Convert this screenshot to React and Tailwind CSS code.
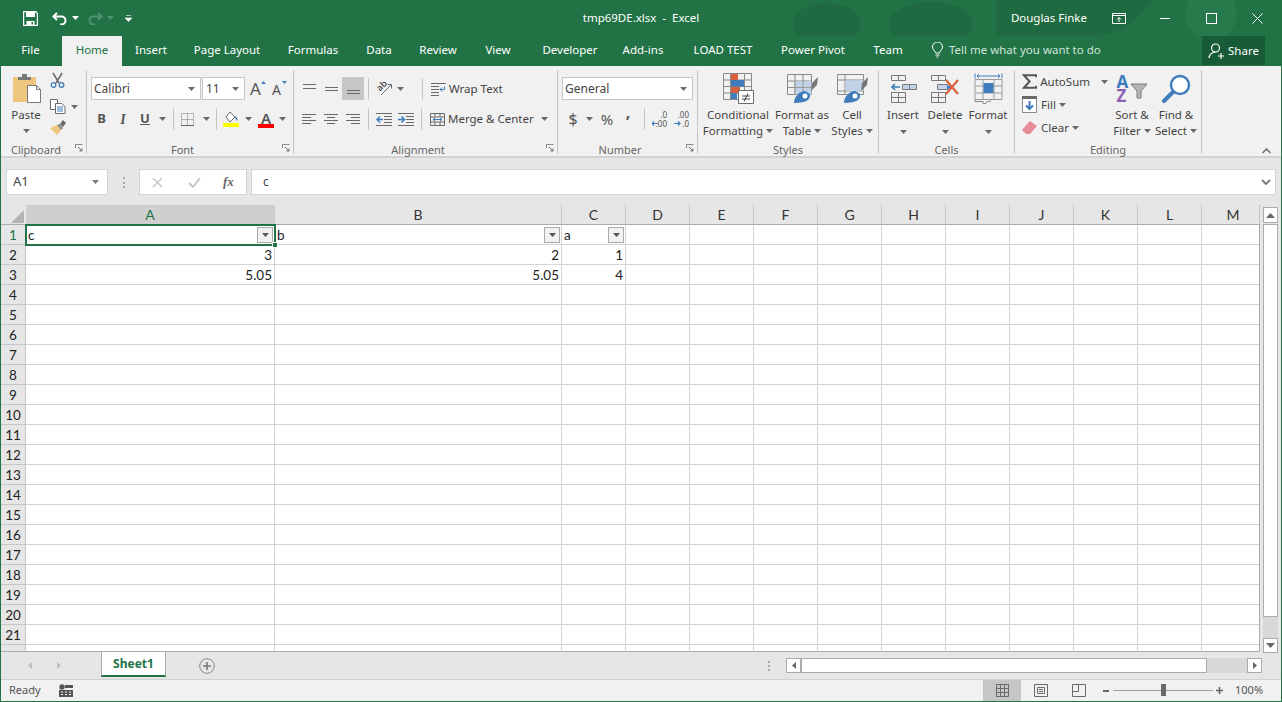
const UI = { fontFamily: '"Noto Sans", "Open Sans", sans-serif' };
const CELL = { fontFamily: 'Lato, "Open Sans", sans-serif' };

const ROWS = Array.from({ length: 21 }, (_, i) => i + 1);
const COLS = ["A", "B", "C", "D", "E", "F", "G", "H", "I", "J", "K", "L", "M"];
const GRID = "grid grid-cols-[25px_249px_287px_64px_64px_64px_64px_64px_64px_64px_64px_64px_64px_58px]";
const TABS = [
  ["Insert", "w-[58px]"],
  ["Page Layout", "w-[94px]"],
  ["Formulas", "w-[78px]"],
  ["Data", "w-[54px]"],
  ["Review", "w-[64px]"],
  ["View", "w-[56px]"],
  ["Developer", "w-[88px]"],
  ["Add-ins", "w-[58px]"],
  ["LOAD TEST", "w-[102px]"],
  ["Power Pivot", "w-[78px]"],
  ["Team", "w-[72px]"],
];

function Caret({ color = "#6a6a6a", className = "" }) {
  return (
    <svg width="7" height="4" viewBox="0 0 7 4" className={`shrink-0 ${className}`}>
      <path d="M0 0h7L3.500 4z" fill={color} />
    </svg>
  );
}

function Sep() {
  return <div className="w-px h-[22px] bg-[#c6c6c6] shrink-0" />;
}

function Launcher() {
  return (
    <svg width="8" height="8" viewBox="0 0 8 8" className="absolute right-[3px] bottom-[2px]">
      <path d="M.5 4V.5H7.500M.5.5V1" stroke="#8a8a8a" fill="none" />
      <path d="M3 3l4 4M7 4.500V7H4.500" stroke="#6a6a6a" fill="none" />
    </svg>
  );
}

function Group({ w, label, launcher, children }) {
  return (
    <div className={`${w} shrink-0 h-[84px] border-r border-[#c6c6c6] flex flex-col relative`}>
      <div className="h-[73px] shrink-0">{children}</div>
      <div className={`h-[14px] shrink-0 leading-[14px] text-center text-[11px] text-[#666] ${launcher ? "pr-[15px]" : ""}`}>
        {label}
      </div>
      {launcher && <Launcher />}
    </div>
  );
}

function Big({ w, icon, lines, caretInline }) {
  return (
    <div className={`${w} shrink-0 flex flex-col items-center`}>
      <div className="h-[37px] flex items-center justify-center">{icon}</div>
      <div className="leading-[16px] text-center whitespace-nowrap">{lines[0]}</div>
      <div className="h-[16px] leading-[16px] flex items-center justify-center whitespace-nowrap gap-[3px]">
        {lines[1]}
        {caretInline ? <Caret /> : <Caret className="mt-[2px]" />}
      </div>
    </div>
  );
}

function Lines({ rows }) {
  return (
    <svg width="15" height="15" viewBox="0 0 15 15" className="shrink-0">
      {rows.map(([y, x1, x2]) => (
        <path key={y} d={`M${x1} ${y}.5H${x2}`} stroke="#6a6a6a" />
      ))}
    </svg>
  );
}

function SaveIcon() {
  return (
    <svg width="15" height="15" viewBox="0 0 15 15">
      <path d="M.5.5h12l2 2v12H.5z" fill="none" stroke="#fff" strokeWidth="1.400" />
      <path d="M3 1h9v5H3zM3.500 10h8v4.500h-8z" fill="#fff" />
      <path d="M8.500 11h1.500v2.500H8.500z" fill="#217346" />
    </svg>
  );
}

function UndoIcon({ color = "#fff" }) {
  return (
    <svg width="15" height="13" viewBox="0 0 15 13">
      <path d="M5 1L1.500 4.500 5 8M2 4.500h7.500a4 4 0 0 1 0 8H8" fill="none" stroke={color} strokeWidth="2" />
    </svg>
  );
}

function RedoIcon() {
  return (
    <svg width="15" height="13" viewBox="0 0 15 13">
      <path d="M10 1l3.500 3.500L10 8M13 4.500H5.500a4 4 0 0 0 0 8H7" fill="none" stroke="#4f9270" strokeWidth="2" />
    </svg>
  );
}

function PasteIcon() {
  return (
    <svg width="30" height="31" viewBox="0 0 30 31">
      <path d="M1 4h23v25H1z" fill="#efc67e" />
      <path d="M6 4h13v3H6zM10 1h5v3h-5z" fill="#7a7a7a" />
      <path d="M15.500 12.500h9l4 4v13h-13z" fill="#fff" stroke="#7a7a7a" />
      <path d="M24.500 12.500v4h4" fill="none" stroke="#7a7a7a" />
    </svg>
  );
}

function CutIcon() {
  return (
    <svg width="15" height="16" viewBox="0 0 15 16">
      <path d="M3 1l6 10M12 1L6 11" stroke="#6a6a6a" strokeWidth="1.500" />
      <circle cx="3.500" cy="13" r="2.300" fill="none" stroke="#3f7cbc" strokeWidth="1.300" />
      <circle cx="11.500" cy="13" r="2.300" fill="none" stroke="#3f7cbc" strokeWidth="1.300" />
    </svg>
  );
}

function CopyIcon() {
  return (
    <svg width="16" height="15" viewBox="0 0 16 15">
      <path d="M.5.5h7v10h-7z" fill="#fff" stroke="#6a6a6a" />
      <path d="M5.500 4.500h6l3.500 3v7H5.500z" fill="#fff" stroke="#6a6a6a" />
      <path d="M7 8h6M7 10h6M7 12h6" stroke="#3f7cbc" />
    </svg>
  );
}

function BrushIcon() {
  return (
    <svg width="16" height="15" viewBox="0 0 16 15">
      <path d="M0 8l7-3 4 5-4 5z" fill="#efc67e" />
      <path d="M7 5l4 5 2-2-3-4z" fill="#8a8a8a" />
      <path d="M10 4l3-4 3 3-3 4z" fill="#6a6a6a" />
    </svg>
  );
}

function BigA() {
  return (
    <span className="relative w-[16px] h-[18px] block shrink-0">
      <span className="absolute left-0 top-[-1px] text-[17px] leading-[20px] text-[#555]">A</span>
      <svg width="5" height="3" className="absolute right-0 top-[1px]"><path d="M0 3h5L2.500 0z" fill="#3f7cbc" /></svg>
    </span>
  );
}

function SmallA() {
  return (
    <span className="relative w-[15px] h-[18px] block shrink-0">
      <span className="absolute left-0 top-[2px] text-[14px] leading-[16px] text-[#555]">A</span>
      <svg width="5" height="3" className="absolute right-0 top-[1px]"><path d="M0 0h5L2.500 3z" fill="#3f7cbc" /></svg>
    </span>
  );
}

function BorderIcon() {
  return (
    <svg width="13" height="13" viewBox="0 0 13 13">
      <path d="M.5.5h12v12H.5zM6.500.5v12M.5 6.500h12" fill="none" stroke="#777" strokeDasharray="1 1" />
      <path d="M0 12.500h13" stroke="#666" />
    </svg>
  );
}

function FillIcon() {
  return (
    <svg width="16" height="16" viewBox="0 0 16 16">
      <path d="M7 1l5 5-5 5-4-5z" fill="#fff" stroke="#6a6a6a" />
      <path d="M12 5c2 1 3 3 2 5-1-1-2-3-2-5z" fill="#3f7cbc" />
      <path d="M0 12h16v4H0z" fill="#ffff00" />
    </svg>
  );
}

function ColorAIcon() {
  return (
    <span className="relative w-[16px] h-[17px] flex justify-center shrink-0">
      <span className="text-[15px] leading-[15px] font-semibold text-[#555]">A</span>
      <span className="absolute left-0 right-0 bottom-0 h-[4px] bg-[#ff0000]" />
    </span>
  );
}

function OrientIcon() {
  return (
    <span className="relative block w-[17px] h-[15px] shrink-0">
      <span className="absolute left-0 top-[-1px] text-[9px] leading-[11px] font-semibold text-[#555] rotate-[-45deg]">ab</span>
      <svg width="17" height="15" viewBox="0 0 17 15" className="absolute left-0 top-0">
        <path d="M5 14L15 4M11.500 3.500h4v4" fill="none" stroke="#6a6a6a" />
      </svg>
    </span>
  );
}

function WrapIcon() {
  return (
    <svg width="15" height="15" viewBox="0 0 15 15">
      <path d="M0 2.500h15M0 5.500h8M0 8.500h8M0 11.500h8M0 14.500h8" stroke="#6a6a6a" />
      <path d="M9 8.500h4.500v-3M9 8.500l2-2M9 8.500l2 2" stroke="#3f7cbc" fill="none" />
    </svg>
  );
}

function MergeIcon() {
  return (
    <svg width="15" height="15" viewBox="0 0 15 15">
      <path d="M.5 1.500h14v12H.5zM.5 5h14M.5 10h14M5 1.500V5M10 1.500V5M5 10v3.500M10 10v3.500" fill="none" stroke="#6a6a6a" />
      <path d="M3 7.500h9M3 7.500l2-1.500M3 7.500L5 9M12 7.500L10 6M12 7.500L10 9" stroke="#3f7cbc" fill="none" />
    </svg>
  );
}

function IndentIcon({ flip }) {
  return (
    <svg width="16" height="13" viewBox="0 0 16 13">
      <path d="M0 .5h16M8 3.500h8M8 6.500h8M8 9.500h8M0 12.500h16" stroke="#6a6a6a" />
      {flip ? (
        <path d="M0 6.500h6M3.500 3.500l3 3-3 3" stroke="#3f7cbc" strokeWidth="1.500" fill="none" />
      ) : (
        <path d="M1 6.500h6M4 3.500l-3 3 3 3" stroke="#3f7cbc" strokeWidth="1.500" fill="none" />
      )}
    </svg>
  );
}

function DecimalIcon({ more }) {
  return (
    <span className="relative block w-[15px] h-[15px] shrink-0">
      <svg width="7" height="7" viewBox="0 0 7 7" className="absolute bottom-0 left-0">
        {more ? (
          <path d="M0 3.500h6M4 1.500l2 2-2 2" stroke="#3f7cbc" strokeWidth="1.200" fill="none" />
        ) : (
          <path d="M0 3.500h6M2 1.500l-2 2 2 2" stroke="#3f7cbc" strokeWidth="1.200" fill="none" />
        )}
      </svg>
      <span className="absolute right-0 top-[-2px] text-[8px] leading-[9px] text-[#555]">{more ? ".00" : ".0"}</span>
      <span className="absolute right-0 bottom-[-1px] text-[8px] leading-[9px] text-[#555]">{more ? ".0" : ".00"}</span>
    </span>
  );
}

function CondIcon() {
  return (
    <svg width="31" height="31" viewBox="0 0 31 31">
      <path d="M.5.500h28v26H.5zM7.500.5v26M21.500.5v26M.5 7h28M.5 13.500h28M.5 20h28" fill="none" stroke="#8a8a8a" />
      <path d="M8 1h7v6H8zM8 14h9v6H8z" fill="#d9603c" />
      <path d="M8 7h13v6.500H8zM8 20h6v6H8z" fill="#3f7cbc" />
      <path d="M15.500 17.500h15v13h-15z" fill="#fff" stroke="#6a6a6a" />
      <path d="M19 23h8M19 26h8M25 20.500l-4 8" stroke="#444" />
    </svg>
  );
}

function TableIcon() {
  return (
    <svg width="31" height="31" viewBox="0 0 31 31">
      <path d="M.5 1.500h24v20H.5zM8 1.500v20M16 1.500v20M.5 8h24M.5 14.500h24" fill="none" stroke="#8a8a8a" />
      <path d="M8.500 8.500h16v13h-16z" fill="#c0d3e8" />
      <path d="M8 8v14M16 8v14M8 14.500h17" stroke="#9a9a9a" />
      <path d="M25 10l6-6-1 8-6 6z" fill="#777" />
      <path d="M7 30c0-7 6-12 11-12l5 3c1 5-3 9-16 9z" fill="#3f7cbc" />
      <circle cx="18" cy="23" r="2.500" fill="#fff" />
    </svg>
  );
}

function CellStyleIcon() {
  return (
    <svg width="31" height="31" viewBox="0 0 31 31">
      <path d="M.5 1.500h26v20H.5zM8 1.500v20M.5 7h26M.5 18h26" fill="none" stroke="#8a8a8a" />
      <path d="M8.500 7.500h18V18h-18z" fill="#c0d3e8" />
      <path d="M25 10l6-6-1 8-6 6z" fill="#777" />
      <path d="M7 30c0-7 6-12 11-12l5 3c1 5-3 9-16 9z" fill="#3f7cbc" />
      <circle cx="18" cy="23" r="2.500" fill="#fff" />
    </svg>
  );
}

function InsertIcon() {
  return (
    <svg width="27" height="28" viewBox="0 0 27 28">
      <path d="M1.500.5h14v5h-14zM8.500.5v5M1.500 17.500h14v10h-14zM1.500 22.500h14M8.500 17.500v10" fill="none" stroke="#7a7a7a" />
      <path d="M12.500 9.500h14v5h-14z" fill="#c0d3e8" stroke="#7a7a7a" />
      <path d="M19.500 9.500v5" stroke="#7a7a7a" />
      <path d="M2 12h8M5 9l-3 3 3 3" stroke="#3f7cbc" strokeWidth="1.700" fill="none" />
    </svg>
  );
}

function DeleteIcon() {
  return (
    <svg width="30" height="28" viewBox="0 0 30 28">
      <path d="M1.500.5h14v5h-14zM8.500.5v5M1.500 17.500h14v10h-14zM1.500 22.500h14M8.500 17.500v10" fill="none" stroke="#7a7a7a" />
      <path d="M7.500 9.500h10v5h-10z" fill="#c0d3e8" stroke="#7a7a7a" />
      <path d="M17 10l5 2-5 3z" fill="#3f7cbc" />
      <path d="M16 5l12 14M28 5L16 19" stroke="#d9603c" strokeWidth="2.200" />
    </svg>
  );
}

function FormatIcon() {
  return (
    <svg width="29" height="31" viewBox="0 0 29 31">
      <path d="M1 .500v5M28 .5v5M3 3h23M3 3l2-2M3 3l2 2M26 3l-2-2M26 3l-2 2" stroke="#3f7cbc" fill="none" />
      <path d="M1 6.500h27v20H1zM9 6.500v20M20 6.500v20M1 13h27M1 20h27" fill="none" stroke="#9a9a9a" />
      <path d="M9.500 10h10v10h-10z" fill="#3f7cbc" />
      <path d="M1 26.500v2h8v2h3l1-2h3l1-2" fill="none" stroke="#8a8a8a" />
    </svg>
  );
}

function SortIcon() {
  return (
    <span className="relative block w-[31px] h-[31px]">
      <span className="absolute left-0 top-[2px] text-[17px] leading-[13px] font-bold text-[#3f7cbc]">A</span>
      <span className="absolute left-0 top-[16px] text-[17px] leading-[13px] font-bold text-[#8f5fb5]">Z</span>
      <svg width="18" height="16" viewBox="0 0 18 16" className="absolute right-0 top-[10px]">
        <path d="M1 1h16l-6 7v7H7V8z" fill="#b5b5b5" stroke="#7a7a7a" />
      </svg>
    </span>
  );
}

function FindIcon() {
  return (
    <svg width="29" height="30" viewBox="0 0 29 30">
      <circle cx="18" cy="11" r="9" fill="#fff" stroke="#3f7cbc" strokeWidth="2.400" />
      <path d="M11 18L2 27" stroke="#3f7cbc" strokeWidth="4" strokeLinecap="round" />
    </svg>
  );
}

function FilterBtn() {
  return (
    <div className="absolute top-[2px] right-[1px] w-[16px] h-[16px] bg-[#f1f1f1] border border-[#ababab] flex items-center justify-center">
      <Caret color="#555" />
    </div>
  );
}

function TitleBar() {
  return (
    <div className="h-[36px] grid grid-cols-[1fr_auto_1fr] items-center relative">
      <svg width="500" height="36" viewBox="0 0 500 36" className="absolute right-0 top-0">
        <ellipse cx="46" cy="24" rx="34" ry="21" fill="#1f6a40" />
        <ellipse cx="150" cy="24" rx="42" ry="22" fill="#1f6a40" />
        <path d="M215 0h155c-5 14-30 36-60 36h-95z" fill="#1f6a40" />
        <circle cx="430" cy="14" r="26" fill="#277a4c" />
      </svg>
      <div className="flex items-center relative pl-[22px]">
        <SaveIcon />
        <div className="ml-[14px]"><UndoIcon /></div>
        <Caret color="#fff" className="ml-[5px]" />
        <div className="ml-[9px]"><RedoIcon /></div>
        <Caret color="#4f9270" className="ml-[4px]" />
        <svg width="7" height="7" viewBox="0 0 7 7" className="ml-[11px]">
          <path d="M1 .500h5M0 3h7L3.500 6.500z" stroke="#fff" fill="#fff" strokeWidth=".6" />
        </svg>
      </div>
      <div className="text-white text-[11.5px] whitespace-pre relative">tmp69DE.xlsx  -  Excel</div>
      <div className="flex items-center justify-end relative">
        <span className="text-white text-[11.5px] whitespace-nowrap">Douglas Finke</span>
        <svg width="14" height="11" viewBox="0 0 14 11" className="ml-[25px]">
          <path d="M.5.5h13v10H.5zM.5 2.500h13M7 9V4.500M5 6.500l2-2 2 2" fill="none" stroke="#fff" />
        </svg>
        <div className="w-[10px] h-px bg-white ml-[34px]" />
        <div className="w-[11px] h-[11px] border border-white ml-[36px]" />
        <svg width="11" height="11" viewBox="0 0 11 11" className="ml-[35px] mr-[18px]">
          <path d="M.5.5l10 10M10.500.5l-10 10" stroke="#fff" />
        </svg>
      </div>
    </div>
  );
}

function TabRow() {
  return (
    <div className="h-[30px] flex items-stretch text-[11.5px] text-white relative">
      <div className="w-[61px] pr-[2px] pb-[2px] flex items-center justify-center">File</div>
      <div className="w-[60px] pb-[2px] flex items-center justify-center bg-[#f1f1f1] text-[#217346]">Home</div>
      {TABS.map(([name, w]) => (
        <div key={name} className={`${w} pb-[2px] flex items-center justify-center whitespace-nowrap`}>{name}</div>
      ))}
      <div className="flex items-center ml-[8px] pb-[2px] text-[#cfe3d8]">
        <svg width="11" height="16" viewBox="0 0 11 16">
          <path d="M3.500 11C3 8.500.5 7.500.5 5a5 5 0 0 1 10 0c0 2.500-2.500 3.500-3 6zM3.500 13h4M4.500 15h2" fill="none" stroke="#fff" />
        </svg>
        <span className="ml-[6px] whitespace-nowrap">Tell me what you want to do</span>
      </div>
      <div className="ml-auto mr-[16px] w-[63px] h-[29px] bg-[#185c37] flex items-center justify-center">
        <svg width="16" height="16" viewBox="0 0 16 16">
          <circle cx="7.500" cy="5" r="4" fill="none" stroke="#fff" strokeWidth="1.200" />
          <path d="M1 15c0-3 3-6 6.500-6M10 13h6M13 10v6" fill="none" stroke="#fff" strokeWidth="1.200" />
        </svg>
        <span className="ml-[4px] text-white">Share</span>
      </div>
    </div>
  );
}

function Ribbon() {
  return (
    <div className="h-[92px] bg-[#f1f1f1] border-b-2 border-[#d2d2d2] pt-[4px] flex text-[11.5px] text-[#444]" style={UI}>
      <Group w="w-[86px]" label="Clipboard" launcher>
        <div className="flex h-full">
          <div className="w-[47px] pl-[3px] flex flex-col items-center">
            <div className="h-[37px] flex items-center pl-[2px]"><PasteIcon /></div>
            <div className="leading-[16px]">Paste</div>
            <div className="h-[16px] flex items-center"><Caret /></div>
          </div>
          <div className="flex flex-col pl-[2px]">
            <div className="h-[22px] pt-[2px]"><CutIcon /></div>
            <div className="h-[25px] pt-[4px] flex items-center gap-[5px]"><CopyIcon /><Caret /></div>
            <div className="pt-[3px]"><BrushIcon /></div>
          </div>
        </div>
      </Group>

      <Group w="w-[207px]" label="Font" launcher>
        <div className="pl-[4px] pt-[7px] flex items-center text-[12px]">
          <div className="w-[110px] h-[23px] bg-white border border-[#c6c6c6] flex items-center justify-between px-[2px] pr-[5px]">
            <span>Calibri</span><Caret />
          </div>
          <div className="w-[43px] h-[23px] bg-white border border-[#c6c6c6] ml-px flex items-center justify-between px-[3px] pr-[5px]">
            <span>11</span><Caret />
          </div>
          <div className="ml-[5px]"><BigA /></div>
          <div className="ml-[6px]"><SmallA /></div>
        </div>
        <div className="pl-[4px] mt-[8px] h-[22px] flex items-center">
          <div className="w-[21px] text-center font-bold text-[13px] text-[#555]">B</div>
          <div className="w-[22px] text-center italic font-bold text-[14px] text-[#555]" style={{ fontFamily: '"Liberation Serif", serif' }}>I</div>
          <div className="w-[22px] text-center underline font-bold text-[13px] text-[#555]">U</div>
          <div className="w-[12px] flex justify-center"><Caret /></div>
          <div className="ml-[5px]"><Sep /></div>
          <div className="w-[27px] flex justify-center"><BorderIcon /></div>
          <div className="w-[10px] flex justify-center"><Caret /></div>
          <div className="ml-[5px]"><Sep /></div>
          <div className="w-[28px] flex justify-center"><FillIcon /></div>
          <Caret />
          <div className="ml-[6px]"><ColorAIcon /></div>
          <Caret className="ml-[5px]" />
        </div>
      </Group>

      <Group w="w-[264px]" label="Alignment" launcher>
        <div className="pl-[8px] pt-[7px] flex items-center h-[30px]">
          <Lines rows={[[3, 1, 14], [7, 1, 14]]} />
          <div className="ml-[7px]"><Lines rows={[[6, 1, 14], [9, 1, 14]]} /></div>
          <div className="ml-[3px] w-[22px] h-[23px] bg-[#c6c6c6] flex items-center justify-center"><Lines rows={[[9, 1, 14], [12, 1, 14]]} /></div>
          <div className="ml-[4px]"><Sep /></div>
          <div className="ml-[7px]"><OrientIcon /></div>
          <Caret className="ml-[4px]" />
          <div className="ml-[18px]"><Sep /></div>
          <div className="ml-[8px]"><WrapIcon /></div>
          <span className="ml-[3px] whitespace-nowrap">Wrap Text</span>
        </div>
        <div className="pl-[8px] mt-[8px] h-[22px] flex items-center">
          <Lines rows={[[2, 0, 14], [5, 0, 9], [8, 0, 14], [11, 0, 9]]} />
          <div className="ml-[7px]"><Lines rows={[[2, 0, 14], [5, 3, 11], [8, 0, 14], [11, 3, 11]]} /></div>
          <div className="ml-[7px]"><Lines rows={[[2, 0, 14], [5, 5, 14], [8, 0, 14], [11, 5, 14]]} /></div>
          <div className="ml-[7px]"><Sep /></div>
          <div className="ml-[7px]"><IndentIcon /></div>
          <div className="ml-[6px]"><IndentIcon flip /></div>
          <div className="ml-[7px]"><Sep /></div>
          <div className="ml-[8px]"><MergeIcon /></div>
          <span className="ml-[3px] w-[86px] whitespace-nowrap">Merge &amp; Center</span>
          <Caret className="ml-[7px]" />
        </div>
      </Group>

      <Group w="w-[140px]" label="Number" launcher>
        <div className="pl-[4px] pt-[7px] text-[12px]">
          <div className="w-[131px] h-[23px] bg-white border border-[#c6c6c6] flex items-center justify-between px-[2px] pr-[5px]">
            <span>General</span><Caret />
          </div>
        </div>
        <div className="pl-[4px] mt-[8px] h-[22px] flex items-center text-[#555]">
          <div className="w-[22px] text-center text-[16px]">$</div>
          <Caret className="ml-[2px]" />
          <div className="ml-[4px] w-[20px] text-center text-[15px]">%</div>
          <div className="ml-px w-[20px] h-[22px] leading-[8px] text-center text-[16px] font-bold">,</div>
          <div className="ml-[6px]"><Sep /></div>
          <div className="ml-[7px]"><DecimalIcon /></div>
          <div className="ml-[7px]"><DecimalIcon more /></div>
        </div>
      </Group>

      <Group w="w-[181px]" label="Styles">
        <div className="flex pl-[6px]">
          <Big w="w-[68px]" icon={<CondIcon />} lines={["Conditional", "Formatting"]} caretInline />
          <Big w="w-[60px]" icon={<TableIcon />} lines={["Format as", "Table"]} caretInline />
          <Big w="w-[40px]" icon={<CellStyleIcon />} lines={["Cell", "Styles"]} caretInline />
        </div>
      </Group>

      <Group w="w-[136px]" label="Cells">
        <div className="flex pl-[3px]">
          <Big w="w-[42px]" icon={<InsertIcon />} lines={["Insert", ""]} />
          <Big w="w-[42px]" icon={<DeleteIcon />} lines={["Delete", ""]} />
          <Big w="w-[44px]" icon={<FormatIcon />} lines={["Format", ""]} />
        </div>
      </Group>

      <Group w="w-[187px]" label="Editing">
        <div className="flex">
          <div className="w-[93px] pl-[7px] flex flex-col">
            <div className="h-[23px] flex items-center">
              <svg width="16" height="15" viewBox="0 0 16 15">
                <path d="M15 3V1H2l6 6.500L2 14h13v-2" fill="none" stroke="#555" strokeWidth="2.200" />
              </svg>
              <span className="ml-[3px]">AutoSum</span>
              <Caret className="ml-[11px]" />
            </div>
            <div className="h-[23px] flex items-center">
              <svg width="15" height="17" viewBox="0 0 15 17">
                <path d="M.5 1.500h14v15H.5z" fill="#fff" stroke="#8a8a8a" />
                <path d="M0 0h15v3H0z" fill="#6a6a6a" />
                <path d="M7.500 5v8M4 9.500l3.500 3.500L11 9.500" stroke="#3f7cbc" strokeWidth="2" fill="none" />
              </svg>
              <span className="ml-[4px]">Fill</span>
              <Caret className="ml-[3px]" />
            </div>
            <div className="h-[23px] flex items-center">
              <svg width="15" height="13" viewBox="0 0 15 13">
                <path d="M0 9l8-9 7 5-7 8H4z" fill="#e88c98" />
              </svg>
              <span className="ml-[4px]">Clear</span>
              <Caret className="ml-[3px]" />
            </div>
          </div>
          <Big w="w-[48px]" icon={<SortIcon />} lines={["Sort &", "Filter"]} caretInline />
          <Big w="w-[40px]" icon={<FindIcon />} lines={["Find &", "Select"]} caretInline />
        </div>
      </Group>

      <div className="flex-1 flex justify-end items-end pb-[2px] pr-[10px]">
        <svg width="9" height="6" viewBox="0 0 9 6"><path d="M.5 5l4-4 4 4" fill="none" stroke="#6a6a6a" strokeWidth="1.500" /></svg>
      </div>
    </div>
  );
}

function FormulaBar() {
  return (
    <div className="h-[47px] pt-[11px] pl-[5px] pr-[5px] flex items-start text-[#444]" style={UI}>
      <div className="w-[102px] h-[26px] bg-white border border-[#d4d4d4] flex items-center justify-between pl-[6px] pr-[8px] text-[13px]">
        <span>A1</span><Caret color="#777" />
      </div>
      <div className="w-[31px] h-[26px] flex items-center justify-center">
        <div className="w-[2px] h-[11px] border-l-2 border-dotted border-[#aaa]" />
      </div>
      <div className="w-[108px] h-[26px] bg-white border border-[#d4d4d4] flex items-center">
        <svg width="11" height="11" viewBox="0 0 11 11" className="ml-[12px]"><path d="M1 1l9 9M10 1l-9 9" stroke="#c6c6c6" strokeWidth="1.500" /></svg>
        <svg width="13" height="11" viewBox="0 0 13 11" className="ml-[25px]"><path d="M1 6l4 4 7-9" stroke="#c6c6c6" strokeWidth="2" fill="none" /></svg>
        <span className="ml-[22px] text-[13px] italic font-bold text-[#666]" style={{ fontFamily: '"Liberation Serif", serif' }}>fx</span>
      </div>
      <div className="ml-[4px] flex-1 h-[26px] bg-white border border-[#d4d4d4] flex items-center justify-between pl-[11px] pr-[4px] text-[12px]">
        <span>c</span>
        <svg width="10" height="6" viewBox="0 0 10 6"><path d="M1 1l4 4 4-4" fill="none" stroke="#777" strokeWidth="1.800" /></svg>
      </div>
    </div>
  );
}

function Sheet() {
  const cellBase = "border-r border-b border-[#d4d4d4] relative";
  return (
    <div className="h-[447px] flex" style={CELL}>
      <div className="w-[1259px] relative bg-white">
        <div className={`${GRID} h-[20px] bg-[#e6e6e6] border-b border-[#ababab] text-[14px] leading-[19px] text-[#333]`}>
          <div className="relative">
            <svg width="13" height="13" viewBox="0 0 13 13" className="absolute left-[10px] bottom-[1px]"><path d="M13 0v13H0z" fill="#b4b4b4" /></svg>
          </div>
          {COLS.map((c) => (
            <div key={c} className={`text-center border-r border-[#c6c6c6] ${c === "A" ? "bg-[#cfcfcf] text-[#217346] border-[#ababab]" : ""} ${c === "M" ? "pl-[5px]" : ""}`}>{c}</div>
          ))}
        </div>
        {ROWS.map((r) => (
          <div key={r} className={`${GRID} grid-rows-[20px] h-[20px] text-[13.5px] leading-[21px] text-[#222]`}>
            <div className={`bg-[#e6e6e6] border-r border-b border-[#c6c6c6] text-center ${r === 1 ? "bg-[#d2d2d2] text-[#217346]" : ""}`}>{r}</div>
            {COLS.map((c) => {
              let text = "";
              let right = true;
              if (r === 1 && c === "A") { text = "c"; right = false; }
              if (r === 1 && c === "B") { text = "b"; right = false; }
              if (r === 1 && c === "C") { text = "a"; right = false; }
              if (r === 2 && c === "A") text = "3";
              if (r === 2 && c === "B") text = "2";
              if (r === 2 && c === "C") text = "1";
              if (r === 3 && c === "A") text = "5.05";
              if (r === 3 && c === "B") text = "5.05";
              if (r === 3 && c === "C") text = "4";
              return (
                <div key={c} className={`${cellBase} ${right ? "text-right pr-[2px]" : "text-left pl-[2px]"}`}>
                  {text}
                  {r === 1 && ["A", "B", "C"].includes(c) && <FilterBtn />}
                </div>
              );
            })}
          </div>
        ))}
        <div className={`${GRID} h-[7px] border-b border-[#ababab]`}>
          <div className="bg-[#e6e6e6] border-r border-[#c6c6c6]" />
          {COLS.map((c) => <div key={c} className="border-r border-[#d4d4d4]" />)}
        </div>
        <div className="absolute right-0 top-[19px] bottom-0 w-px bg-[#ababab]" />
        {/* selected cell A1 */}
        <div className="absolute left-[24px] top-[19px] w-[251px] h-[22px] border-2 border-[#217346]">
          <div className="absolute right-[-4px] bottom-[-4px] w-[6px] h-[6px] bg-[#217346] border border-white" />
        </div>
      </div>
      <div className="flex-1 bg-[#e6e6e6] pl-[3px] pr-[3px] pt-[2px] flex flex-col">
        <div className="h-[16px] bg-white border border-[#ababab] flex items-center justify-center shrink-0">
          <svg width="9" height="5" viewBox="0 0 9 5"><path d="M0 5h9L4.500 0z" fill="#666" /></svg>
        </div>
        <div className="h-[393px] mt-px bg-white border border-[#ababab] shrink-0" />
        <div className="h-[21px] bg-[#d8d8d8] shrink-0" />
        <div className="h-[15px] bg-white border border-[#ababab] flex items-center justify-center shrink-0">
          <svg width="9" height="5" viewBox="0 0 9 5"><path d="M0 0h9L4.500 5z" fill="#666" /></svg>
        </div>
      </div>
    </div>
  );
}

function SheetTabs() {
  return (
    <div className="h-[28px] bg-[#e6e6e6] border-b border-[#cfcfcf] flex" style={UI}>
      <div className="w-[100px] flex items-center">
        <svg width="4" height="7" viewBox="0 0 4 7" className="ml-[27px]"><path d="M4 0v7L0 3.500z" fill="#bdbdbd" /></svg>
        <svg width="4" height="7" viewBox="0 0 4 7" className="ml-[25px]"><path d="M0 0v7l4-3.500z" fill="#bdbdbd" /></svg>
      </div>
      <div className="w-[65px] h-[25px] bg-white border-x border-[#ababab] border-b-2 border-b-[#217346] flex items-center justify-center text-[12px] font-bold text-[#217346]">
        Sheet1
      </div>
      <div className="flex items-center h-[27px]">
        <svg width="16" height="16" viewBox="0 0 16 16" className="ml-[33px]">
          <circle cx="8" cy="8" r="7.300" fill="none" stroke="#888" />
          <path d="M4 8h8M8 4v8" stroke="#777" strokeWidth="1.600" />
        </svg>
        <div className="ml-[553px] w-[2px] h-[10px] border-l-2 border-dotted border-[#aaa]" />
        <div className="ml-[16px] w-[15px] h-[15px] bg-white border border-[#ababab] flex items-center justify-center">
          <svg width="4" height="7" viewBox="0 0 4 7"><path d="M4 0v7L0 3.500z" fill="#666" /></svg>
        </div>
        <div className="w-[406px] h-[15px] bg-white border border-[#ababab]" />
        <div className="w-[40px] h-[15px] bg-[#d8d8d8]" />
        <div className="w-[15px] h-[15px] bg-white border border-[#ababab] flex items-center justify-center">
          <svg width="4" height="7" viewBox="0 0 4 7"><path d="M0 0v7l4-3.500z" fill="#666" /></svg>
        </div>
      </div>
    </div>
  );
}

function StatusBar() {
  return (
    <div className="h-[21px] bg-[#f1f1f1] flex items-center text-[11px] text-[#555]" style={UI}>
      <span className="ml-[8px] w-[50px]">Ready</span>
      <svg width="14" height="13" viewBox="0 0 14 13">
        <circle cx="3" cy="3" r="2.700" fill="#555" />
        <path d="M6 1h8v3H6zM0 6h14v7H0z" fill="#555" />
        <path d="M2 8h2M6 8h2M10 8h2M2 10.500h2M6 10.500h2M10 10.500h2" stroke="#f1f1f1" />
      </svg>
      <div className="ml-[910px] w-[38px] h-[21px] bg-[#c6c6c6] flex items-center justify-center">
        <svg width="13" height="13" viewBox="0 0 13 13"><path d="M.5.500h12v12H.5zM4.500.5v12M8.500.5v12M.5 4.500h12M.5 8.500h12" fill="none" stroke="#6a6a6a" /></svg>
      </div>
      <svg width="14" height="13" viewBox="0 0 14 13" className="ml-[13px]">
        <path d="M.5.500h13v12H.5zM3.500 3.500h7v6h-7zM5 5.500h4M5 7.500h4" fill="none" stroke="#6a6a6a" />
      </svg>
      <svg width="14" height="13" viewBox="0 0 14 13" className="ml-[24px]">
        <path d="M.5.500h13v12H.5zM6.500.5v7H.5" fill="none" stroke="#6a6a6a" />
      </svg>
      <div className="ml-[17px] w-[6px] h-[2px] bg-[#666]" />
      <div className="w-[100px] h-px bg-[#a0a0a0] relative ml-[4px]">
        <div className="absolute left-[48px] top-[-6px] w-[5px] h-[12px] bg-[#6a6a6a]" />
      </div>
      <svg width="7" height="7" viewBox="0 0 7 7" className="ml-[3px]"><path d="M0 3.500h7M3.500 0v7" stroke="#666" strokeWidth="1.600" /></svg>
      <span className="ml-[12px]">100%</span>
    </div>
  );
}

export default function App() {
  return (
    <div className="w-[1282px] h-[702px] overflow-hidden bg-[#e6e6e6] border-x border-b border-[#217346]">
      <div className="bg-[#217346]" style={UI}>
        <TitleBar />
        <TabRow />
      </div>
      <Ribbon />
      <FormulaBar />
      <Sheet />
      <SheetTabs />
      <StatusBar />
    </div>
  );
}
